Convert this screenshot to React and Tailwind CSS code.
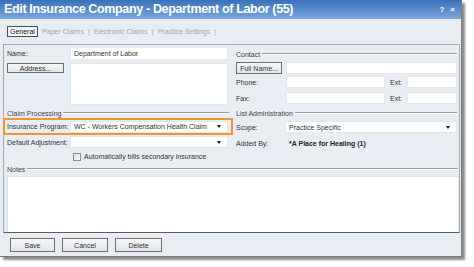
import React from 'react';

function Field({ className = '', children }) {
  return (
    <div className={`h-[12px] bg-white border border-[#e3e7ec] flex items-center px-[3px] ${className}`}>
      {children}
    </div>
  );
}

function Select({ className = '', value }) {
  return (
    <Field className={className}>
      <span className="flex-1 whitespace-nowrap">{value}</span>
      <span className="w-0 h-0 border-l-[2px] border-r-[2px] border-t-[3px] border-l-transparent border-r-transparent border-t-[#111] mr-[3px]" />
    </Field>
  );
}

function Heading({ label }) {
  return (
    <div className="h-[10px] flex items-center gap-[2px]">
      <span className="whitespace-nowrap text-[#444]">{label}</span>
      <div className="flex-1 h-[2px] border-t border-[#9a9a9a] border-b border-b-white" />
    </div>
  );
}

function Btn({ className = '', children }) {
  return (
    <div
      className={`flex items-center justify-center border border-[#6f6f6f] bg-gradient-to-b from-[#f7f7f7] to-[#e2e4e7] text-[#333] ${className}`}
    >
      {children}
    </div>
  );
}

export default function App() {
  return (
    <div className="w-[474px] h-[267px] bg-white overflow-hidden font-['Liberation_Sans',Arial,sans-serif] text-[7px] leading-none text-[#333]">
      <div className="w-[462px] h-[257px] bg-[#e8edf4] border-r border-b border-[#7a7a7a] shadow-[3px_3px_2px_rgba(0,0,0,0.45)] flex flex-col">
        {/* title bar */}
        <div className="h-[19px] shrink-0 bg-gradient-to-b from-[#3a71bb] to-[#7aa7dd] flex items-center justify-between pl-[4px] pr-[6px]">
          <span className="text-white font-bold text-[12.5px] tracking-[-0.35px] whitespace-nowrap">
            Edit Insurance Company - Department of Labor (55)
          </span>
          <span className="flex gap-[6px] text-white font-bold text-[8px]">
            <span>?</span>
            <span>×</span>
          </span>
        </div>

        {/* tabs */}
        <div className="h-[25px] shrink-0 pt-[7px] pl-[7px] flex items-start gap-[4px] text-[#a3a9b1]">
          <div className="h-[11px] px-[2px] border border-[#4f4f4f] bg-[#f3f5f8] flex items-center text-[#222]">General</div>
          <span className="h-[11px] flex items-center">Paper Claims</span>
          <span className="h-[11px] flex items-center">|</span>
          <span className="h-[11px] flex items-center">Electronic Claims</span>
          <span className="h-[11px] flex items-center">|</span>
          <span className="h-[11px] flex items-center">Practice Settings</span>
          <span className="h-[11px] flex items-center">|</span>
        </div>

        {/* panel */}
        <div className="ml-[3px] w-[457px] h-[189px] shrink-0 border border-[#a3aab3] border-b-[#5c5c5c] flex flex-col">
          <div className="h-[118px] flex">
            {/* left column */}
            <div className="w-[229px] flex flex-col">
              <div className="mt-[2px] h-[13px] flex items-center pl-[3px]">
                <span className="w-[63px]">Name:</span>
                <Field className="w-[158px] h-[13px]">Department of Labor</Field>
              </div>
              <div className="mt-[3px] h-[42px] flex pl-[3px]">
                <div className="w-[63px]">
                  <Btn className="w-[57px] h-[10px]">Address...</Btn>
                </div>
                <div className="w-[158px] h-[42px] bg-white border border-[#e3e7ec]" />
              </div>
              <div className="mt-[3px] pl-[3px] pr-[4px]">
                <Heading label="Claim Processing" />
              </div>
              <div className="-ml-px w-[230px] h-[17px] border-2 border-[#f0962a] flex items-center pl-[2px]">
                <span className="w-[63px] whitespace-nowrap">Insurance Program:</span>
                <Select className="w-[158px]" value="WC - Workers Compensation Health Claim" />
              </div>
              <div className="mt-[1px] h-[12px] flex items-center pl-[3px]">
                <span className="w-[63px] whitespace-nowrap">Default Adjustment:</span>
                <Select className="w-[158px]" value="" />
              </div>
              <div className="mt-[4px] h-[9px] flex items-center pl-[69px] gap-[3px]">
                <div className="w-[8px] h-[8px] border border-[#8e8e8e] bg-gradient-to-br from-[#dcdfe3] to-[#f8f9fa]" />
                <span className="whitespace-nowrap">Automatically bills secondary insurance</span>
              </div>
            </div>

            {/* right column */}
            <div className="w-[226px] flex flex-col pl-[3px] pr-[2px]">
              <div className="mt-[4px]">
                <Heading label="Contact" />
              </div>
              <div className="mt-[3px] h-[12px] flex items-center">
                <Btn className="w-[46px] h-[12px]">Full Name...</Btn>
                <Field className="ml-[4px] flex-1" />
              </div>
              <div className="mt-[2px] h-[12px] flex items-center">
                <span className="w-[50px]">Phone:</span>
                <Field className="w-[99px]" />
                <span className="ml-[5px] w-[17px]">Ext:</span>
                <Field className="flex-1" />
              </div>
              <div className="mt-[4px] h-[12px] flex items-center">
                <span className="w-[50px]">Fax:</span>
                <Field className="w-[99px]" />
                <span className="ml-[5px] w-[17px]">Ext:</span>
                <Field className="flex-1" />
              </div>
              <div className="mt-[4px]">
                <Heading label="List Administration" />
              </div>
              <div className="mt-[3px] h-[12px] flex items-center">
                <span className="w-[49px]">Scope:</span>
                <Select className="flex-1" value="Practice Specific" />
              </div>
              <div className="mt-[5px] h-[10px] flex items-center">
                <span className="w-[53px]">Added By:</span>
                <span className="font-bold text-[#222] whitespace-nowrap">*A Place for Healing (1)</span>
              </div>
            </div>
          </div>

          <div className="mt-[1px] pl-[3px] pr-[1px]">
            <Heading label="Notes" />
          </div>
          <div className="mt-[2px] flex-1 ml-[3px] mr-[1px] bg-white border-t border-l border-[#dfe3e8]" />
        </div>

        {/* buttons */}
        <div className="mt-[5px] pl-[10px] flex gap-[7px]">
          <Btn className="w-[45px] h-[14px]">Save</Btn>
          <Btn className="w-[46px] h-[14px]">Cancel</Btn>
          <Btn className="w-[47px] h-[14px]">Delete</Btn>
        </div>
      </div>
    </div>
  );
}
